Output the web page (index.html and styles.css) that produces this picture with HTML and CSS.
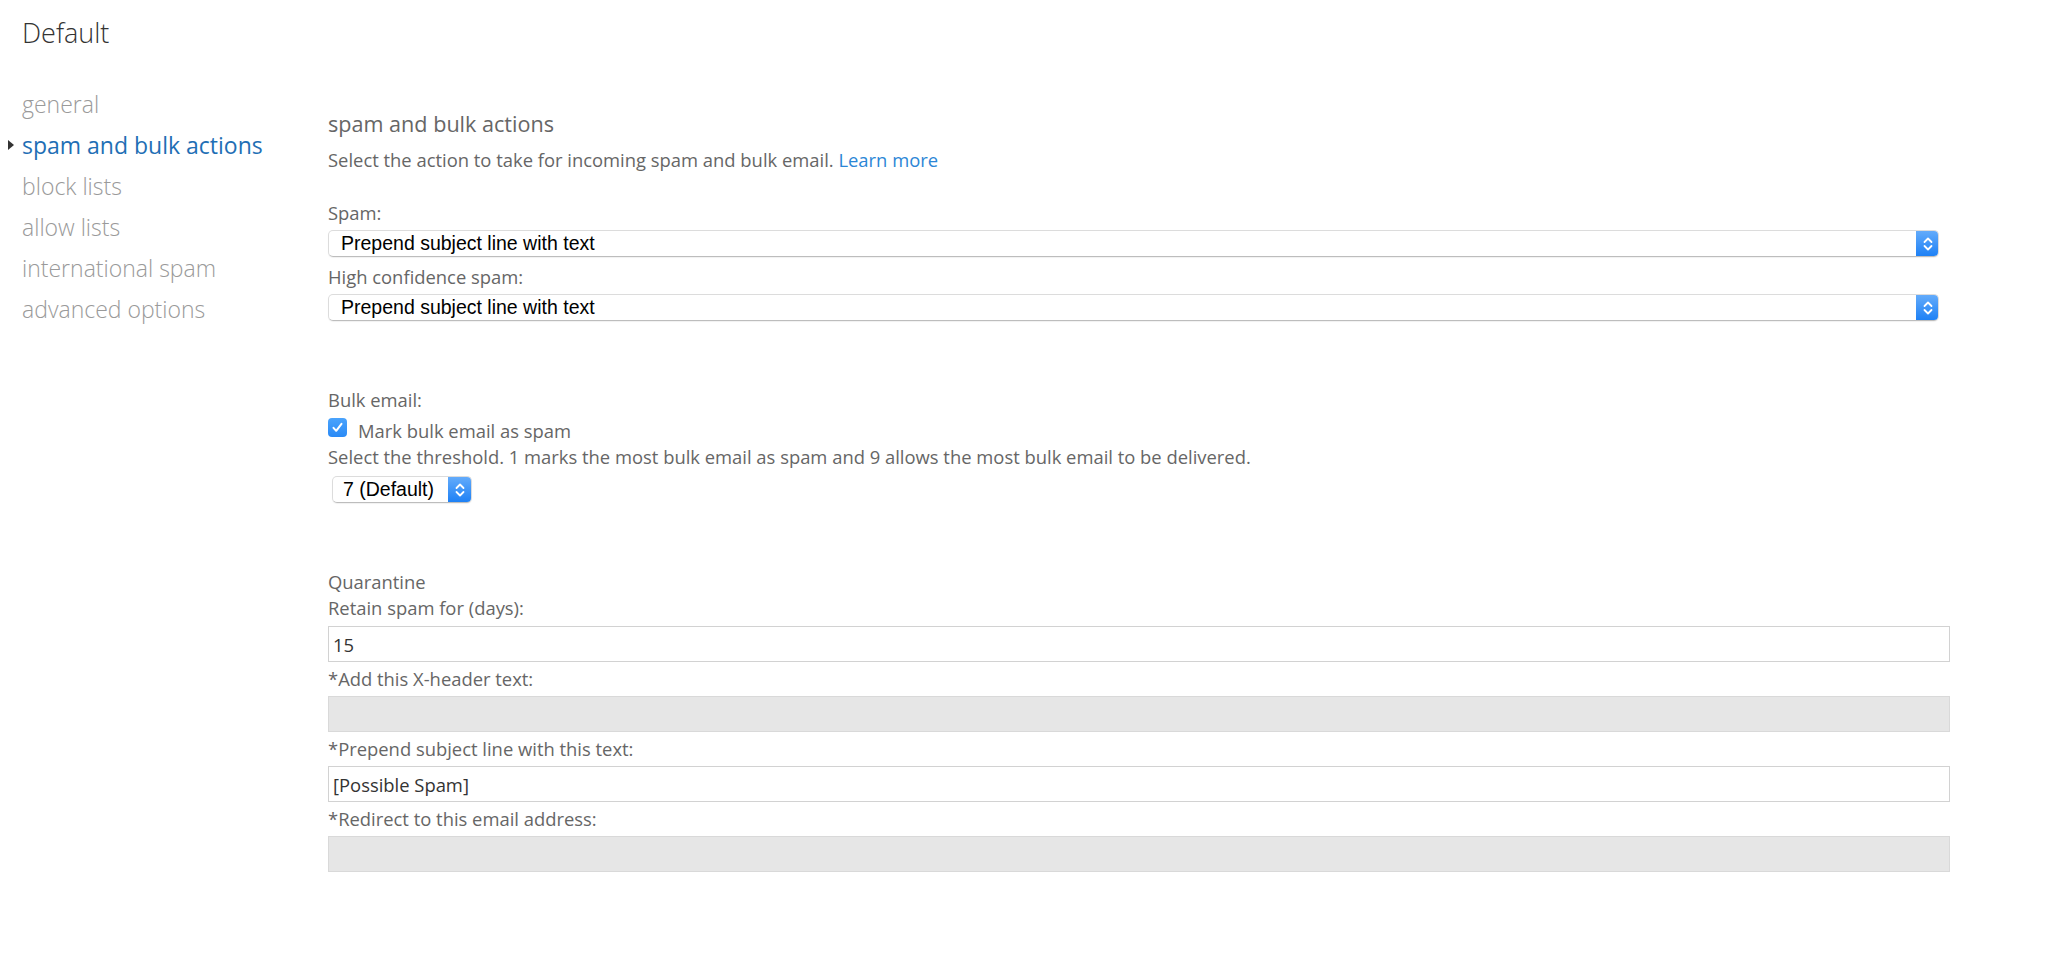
FILE: index.html
```
<!DOCTYPE html>
<html lang="en">
  <head>
    <meta charset="utf-8" />
    <title>Default - spam filter policy</title>
    <link rel="stylesheet" href="styles.css">
  </head>
  <body>
    <h1 class="title">Default</h1>
    <div class="main">
      <ul class="nav">
        <li>general</li>
        <li class="active">spam and bulk actions</li>
        <li>block lists</li>
        <li>allow lists</li>
        <li>international spam</li>
        <li>advanced options</li>
      </ul>
      <div class="content">
        <h2 class="heading">spam and bulk actions</h2>
        <p class="desc">Select the action to take for incoming spam and bulk email. <a href="#" class="link">Learn more</a></p>

        <div class="lbl">Spam:</div>
        <div class="select wide">
          <span class="value">Prepend subject line with text</span>
          <span class="arrows">
            <svg width="12" height="18" viewBox="0 0 12 18"><path d="M2.5 7 L6 3.5 L9.5 7 M2.5 11 L6 14.5 L9.5 11" fill="none" stroke="#fff" stroke-width="1.8" stroke-linecap="round" stroke-linejoin="round"/></svg>
          </span>
        </div>
        <div class="lbl">High confidence spam:</div>
        <div class="select wide">
          <span class="value">Prepend subject line with text</span>
          <span class="arrows">
            <svg width="12" height="18" viewBox="0 0 12 18"><path d="M2.5 7 L6 3.5 L9.5 7 M2.5 11 L6 14.5 L9.5 11" fill="none" stroke="#fff" stroke-width="1.8" stroke-linecap="round" stroke-linejoin="round"/></svg>
          </span>
        </div>

        <div class="section">
          <div class="lbl">Bulk email:</div>
          <div class="checkrow">
            <span class="check">
              <svg width="19" height="19" viewBox="0 0 19 19"><path d="M5.5 9.8 L8.2 12.8 L13.5 5.8" fill="none" stroke="#fff" stroke-width="2" stroke-linecap="round" stroke-linejoin="round"/></svg>
            </span>
            <span>Mark bulk email as spam</span>
          </div>
          <div class="text">Select the threshold. 1 marks the most bulk email as spam and 9 allows the most bulk email to be delivered.</div>
          <div class="select small">
            <span class="value">7 (Default)</span>
            <span class="arrows">
              <svg width="12" height="18" viewBox="0 0 12 18"><path d="M2.5 7 L6 3.5 L9.5 7 M2.5 11 L6 14.5 L9.5 11" fill="none" stroke="#fff" stroke-width="1.8" stroke-linecap="round" stroke-linejoin="round"/></svg>
            </span>
          </div>
        </div>

        <div class="section">
          <div class="text">Quarantine</div>
          <div class="lbl first">Retain spam for (days):</div>
          <input type="text" class="field" value="15">
          <div class="lbl">*Add this X-header text:</div>
          <input type="text" class="field" disabled>
          <div class="lbl">*Prepend subject line with this text:</div>
          <input type="text" class="field" value="[Possible Spam]">
          <div class="lbl">*Redirect to this email address:</div>
          <input type="text" class="field" disabled>
        </div>
      </div>
    </div>
  </body>
</html>
```

FILE: styles.css
```
html, body {
  margin: 0;
  background: #fff;
}
body {
  font-family: "Open Sans", "Noto Sans", sans-serif;
  font-size: 18.4px;
  color: #666;
}
.title {
  margin: 15px 0 0 22px;
  font-size: 27px;
  font-weight: 300;
  line-height: 36px;
  color: #333;
}
.main {
  display: flex;
  margin-top: 33px;
}
.nav {
  flex: none;
  width: 320px;
  margin: 0;
  padding: 0 0 0 8px;
  list-style: none;
  font-size: 23px;
  font-weight: 300;
  line-height: 41px;
  color: #9a9a9a;
}
.nav li {
  padding-left: 14px;
  white-space: nowrap;
}
.nav li.active {
  color: #1f6fb5;
  font-weight: 400;
}
.nav li.active::before {
  content: "";
  display: inline-block;
  margin-left: -14px;
  margin-right: 8px;
  border-left: 6px solid #333;
  border-top: 5px solid transparent;
  border-bottom: 5px solid transparent;
  vertical-align: 4px;
}
.content {
  flex: 1;
  padding: 25px 98px 0 0;
}
.heading {
  margin: 0;
  font-size: 21.6px;
  font-weight: 400;
  line-height: 30px;
  color: #666;
}
.desc {
  margin: 8px 0 27px;
  line-height: 26px;
}
.link {
  color: #2b86d6;
  text-decoration: none;
}
.lbl {
  line-height: 26px;
  margin: 4px 0;
}
.lbl.first {
  margin-top: 0;
  margin-bottom: 5px;
}
.text {
  line-height: 26px;
}
.section {
  margin-top: 66px;
}
.section .lbl:first-child {
  margin-top: 0;
}

/* mac style popup */
.select {
  display: flex;
  height: 27px;
  box-sizing: border-box;
  border: 1px solid #dcdcdc;
  border-bottom-color: #bdbdbd;
  border-radius: 5px;
  box-shadow: 0 1px 1px rgba(0, 0, 0, 0.06);
  font-family: "Liberation Sans", Arial, sans-serif;
  font-size: 19.5px;
  line-height: 25px;
  color: #000;
  overflow: hidden;
}
.select.wide {
  margin-right: 11px;
  margin-bottom: 7px;
}
.select.small {
  width: 140px;
  margin: 6px 0 0 4px;
}
.select .value {
  flex: 1;
  padding-left: 12px;
  white-space: nowrap;
}
.select.small .value {
  padding-left: 10px;
}
.arrows {
  display: flex;
  align-items: center;
  justify-content: center;
  width: 23px;
  margin: -1px -1px -1px 0;
  background: linear-gradient(#66adfb, #1b7ff5);
  border-radius: 0 5px 5px 0;
}
.select.small .arrows {
  width: 24px;
}

.checkrow {
  display: flex;
  margin-top: 5px;
  line-height: 26px;
}
.check {
  width: 19px;
  height: 19px;
  margin-right: 11px;
  border-radius: 4px;
  background: linear-gradient(#4aa3fc, #2a8af6);
}
.check svg {
  display: block;
}

.field {
  display: block;
  width: 100%;
  height: 36px;
  box-sizing: border-box;
  margin: 0;
  padding: 0 4px;
  border: 1px solid #d2d2d2;
  border-radius: 0;
  font-family: "Open Sans", "Noto Sans", sans-serif;
  font-size: 18.4px;
  color: #333;
  background: #fff;
  outline: none;
}
.field:disabled {
  background: #e6e6e6;
  border-color: #d9d9d9;
}
```
